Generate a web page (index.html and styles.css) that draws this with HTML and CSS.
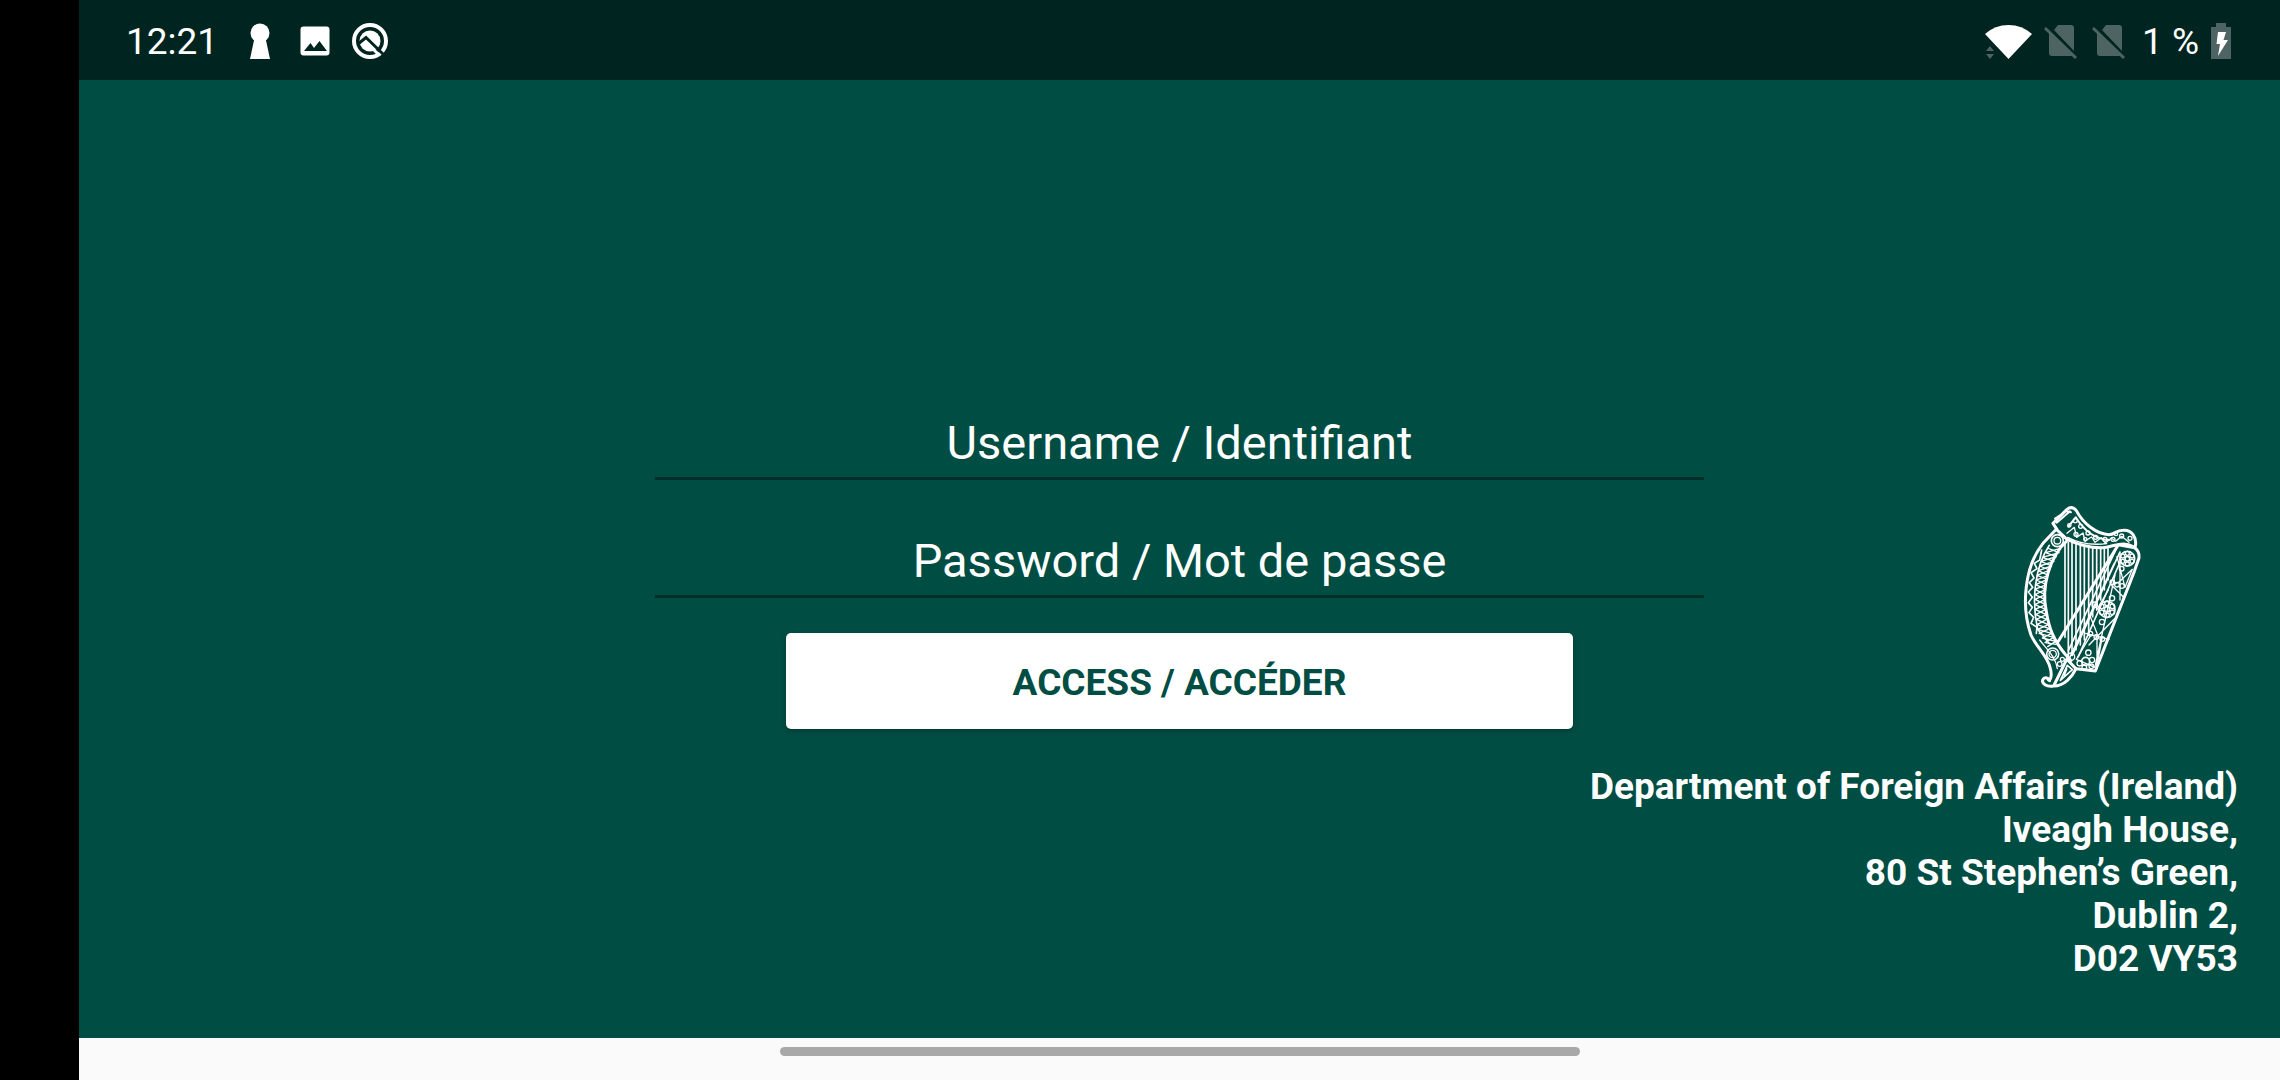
FILE: index.html
```html
<!DOCTYPE html>
<html lang="en">
  <head>
    <meta charset="UTF-8" />
    <meta name="viewport" content="width=device-width, initial-scale=1.0" />
    <title>Department of Foreign Affairs - Login</title>
    <link rel="stylesheet" href="styles.css">
  </head>
  <body>
    <div class="screen">
      <header class="status-bar">
        <span class="clock">12:21</span>
        <div class="notifications">
          <svg class="icon" viewBox="0 0 36 36" fill="#fff">
            <circle cx="18" cy="10" r="9.5" />
            <path d="M12.500 15h11l4.500 21H8z" />
          </svg>
          <svg class="icon" viewBox="0 0 36 36" fill="#fff" fill-rule="evenodd">
            <path d="M6.500 3.500h23a3 3 0 0 1 3 3v23a3 3 0 0 1-3 3h-23a3 3 0 0 1-3-3v-23a3 3 0 0 1 3-3zM7 28h23l-7.500-10-5.500 7-3.500-5z" />
          </svg>
          <svg class="icon" viewBox="0 0 36 36" fill="none">
            <circle cx="18" cy="18" r="16" stroke="#fff" stroke-width="4" />
            <circle cx="18" cy="18" r="10.500" fill="#fff" />
            <path d="M6 21l8-6.500L32 32" stroke="#00241f" stroke-width="3" />
            <path d="M15 20l12 12" stroke="#fff" stroke-width="3" />
          </svg>
        </div>
        <div class="system">
          <svg class="icon-wifi" viewBox="0 0 47 36">
            <path d="M0 11Q10 2 23.500 2T47 11L23.500 36z" fill="#fff" />
            <path d="M1 28l4-5 4 5zM1 31h8l-4 5z" fill="#4d6462" />
          </svg>
          <svg class="icon" viewBox="0 0 36 36" fill="#4d6462">
            <path d="M14 2h13a3 3 0 0 1 3 3v23L10 7zM5 9l24 24H8a3 3 0 0 1-3-3z" />
            <path d="M1 5l31 30" stroke="#4d6462" stroke-width="3" />
          </svg>
          <svg class="icon" viewBox="0 0 36 36" fill="#4d6462">
            <path d="M14 2h13a3 3 0 0 1 3 3v23L10 7zM5 9l24 24H8a3 3 0 0 1-3-3z" />
            <path d="M1 5l31 30" stroke="#4d6462" stroke-width="3" />
          </svg>
          <span class="battery-level">1 %</span>
          <svg class="icon-battery" viewBox="0 0 20 36">
            <path d="M5 0h10v4h5v32H0V4h5z" fill="#4d6462" />
            <path d="M7 9h8l-2.500 8H17L7 33l2-12H5.500z" fill="#fff" />
          </svg>
        </div>
      </header>

      <main class="content">
        <form class="login-form" id="loginForm">
          <input type="text" class="field" name="username" aria-label="Username / Identifiant" placeholder="Username / Identifiant" />
          <input type="password" class="field" name="password" aria-label="Password / Mot de passe" placeholder="Password / Mot de passe" />
          <button type="submit" class="access-btn">ACCESS / ACCÉDER</button>
        </form>

        <div class="department">
          <svg class="harp" viewBox="0 0 405 585" fill="none" stroke="#fff" stroke-linejoin="round" stroke-linecap="round">
            <!-- strings -->
            <path d="M150 128V412M160 128V470M171 130V462M183 132V450M196 135V435M208 137V420M221 140V400M233 142V350M245 143V330M257 143V300M268 143V270M279 143V240" stroke-width="5" />
            <!-- neck -->
            <path d="M114 70L156 28Q171 16 184 32C205 72 246 103 282 104C300 104 302 91 324 91C350 89 368 112 360 143M114 70L128 92L156 118C190 134 225 145 264 143C282 142 290 136 310 134L360 143" stroke-width="9" />
            <path d="M120 56l14-9M151 33l17 4M125 68l40-34M160 80l22-28C205 88 238 118 282 120" stroke-width="6" />
            <path d="M156 100l22-18 7 30 19-13 6 24 20-12 10 16 19-14 12 16 18-15 13 10 18-15 22 18M158 112C195 132 240 135 275 131" stroke-width="4" />
            <g stroke-width="4">
              <circle cx="181" cy="62" r="6" />
              <circle cx="163" cy="76" r="5" />
              <circle cx="197" cy="79" r="6" />
              <circle cx="219" cy="99" r="6" />
              <circle cx="183" cy="103" r="6" />
              <circle cx="242" cy="112" r="6" />
              <circle cx="211" cy="118" r="5" />
              <circle cx="270" cy="118" r="6" />
              <circle cx="294" cy="118" r="6" />
              <circle cx="303" cy="102" r="5" />
              <circle cx="320" cy="108" r="6" />
              <circle cx="345" cy="115" r="6" />
            </g>
            <!-- fore pillar -->
            <path d="M124 88L84 130C28 200 18 320 48 405C62 438 99 470 106 505C112 528 106 545 99 538" stroke-width="9" />
            <path d="M158 120C102 172 78 260 94 335C102 385 116 420 150 462L168 482" stroke-width="9" />
            <path d="M103 136C60 200 48 300 68 388L102 430" stroke-width="5" />
            <!-- lattice between the two curves -->
            <path d="M100 145L132 158L82 172L117 184L74 198L104 210L66 226L97 238L62 254L92 268L60 284L90 298L60 314L92 328L62 344L95 358L66 374L104 386L72 400L116 412L90 428L128 434" stroke-width="4" />
            <path d="M136 145L92 158L124 170L78 184L110 198L70 212L100 226L64 240L94 254L60 268L90 284L60 298L92 314L60 328L94 344L64 358L100 374L68 388L110 400L82 414L122 424L98 440" stroke-width="4" />
            <path d="M80 150l-6 30-16 10 8 16-18 12 9 16-14 14 10 14-13 14 12 16-12 16 12 14-10 16 14 14-8 18 18 12-2 18" stroke-width="5" />
            <circle cx="127" cy="122" r="18" stroke-width="5" />
            <circle cx="127" cy="122" r="10" stroke-width="4" />
            <circle cx="113" cy="462" r="18" stroke-width="5" />
            <circle cx="113" cy="462" r="11" stroke-width="4" />
            <path d="M74 420C94 446 122 470 127 506" stroke-width="4" />
            <!-- sound box -->
            <path d="M310 134C340 126 376 144 372 174L358 214L241 513L183 506M310 134L130 424" stroke-width="9" />
            <path d="M304 146L160 452M314 158L172 466M318 180L190 470M298 190L160 482" stroke-width="5" />
            <path d="M315 155V300M306 170L330 262L352 208L312 246L290 256L326 292M300 225L240 500M280 270L245 330M226 350L246 400V506M300 355L222 435M212 400L282 418M226 408L184 478L240 502M262 410L244 506" stroke-width="4" />
            <g stroke-width="5">
              <circle cx="337" cy="176" r="22" />
              <circle cx="337" cy="176" r="7" />
              <circle cx="276" cy="328" r="24" />
              <circle cx="276" cy="328" r="8" />
              <circle cx="212" cy="484" r="12" />
            </g>
            <g stroke-width="4">
              <circle cx="337" cy="160" r="6" />
              <circle cx="351" cy="168" r="6" />
              <circle cx="351" cy="184" r="6" />
              <circle cx="337" cy="192" r="6" />
              <circle cx="323" cy="184" r="6" />
              <circle cx="323" cy="168" r="6" />
              <circle cx="320" cy="206" r="7" />
              <circle cx="292" cy="247" r="7" />
              <circle cx="306" cy="254" r="7" />
              <circle cx="321" cy="258" r="7" />
              <circle cx="276" cy="310" r="7" />
              <circle cx="292" cy="319" r="7" />
              <circle cx="292" cy="337" r="7" />
              <circle cx="276" cy="346" r="7" />
              <circle cx="260" cy="337" r="7" />
              <circle cx="260" cy="319" r="7" />
              <circle cx="291" cy="295" r="8" />
              <circle cx="261" cy="366" r="8" />
              <circle cx="239" cy="314" r="8" />
              <circle cx="226" cy="401" r="7" />
              <circle cx="244" cy="411" r="7" />
              <circle cx="262" cy="417" r="7" />
              <circle cx="220" cy="458" r="8" />
              <circle cx="194" cy="490" r="8" />
              <circle cx="231" cy="480" r="8" />
              <circle cx="229" cy="499" r="7" />
              <circle cx="208" cy="502" r="7" />
              <circle cx="134" cy="492" r="7" />
              <circle cx="142" cy="478" r="6" />
              <circle cx="168" cy="470" r="11" />
            </g>
            <!-- foot -->
            <path d="M160 482L183 506C172 530 148 558 116 558C94 562 80 550 83 540C88 530 98 532 104 542M155 478L116 558" stroke-width="9" />
            <path d="M157 496L172 509L136 541zM155 507L148 526" stroke-width="5" />
          </svg>
          <address class="address">
            Department of Foreign Affairs (Ireland)<br />
            Iveagh House,<br />
            80 St Stephen’s Green,<br />
            Dublin 2,<br />
            D02 VY53
          </address>
        </div>
      </main>

      <footer class="nav-bar">
        <div class="nav-handle"></div>
      </footer>
    </div>
  </body>
</html>
```
FILE: styles.css
```css
* {
  box-sizing: border-box;
}
body {
  margin: 0;
  padding-left: 79px;
  background-color: #000;
  color: #fff;
  font-family: Roboto, sans-serif;
}
.screen {
  display: flex;
  flex-direction: column;
  min-height: 100vh;
  background-color: #004d44;
}

/* status bar */
.status-bar {
  display: flex;
  align-items: center;
  height: 80px;
  padding: 2px 49px 0 47px;
  background-color: #00241f;
  font-size: 37px;
}
.notifications {
  display: flex;
  gap: 19px;
  margin-left: 24px;
}
.system {
  display: flex;
  align-items: center;
  gap: 12px;
  margin-left: auto;
}
.battery-level {
  margin-left: 2px;
}
.icon {
  width: 36px;
  height: 36px;
}
.icon-wifi {
  width: 47px;
  height: 36px;
}
.icon-battery {
  width: 20px;
  height: 36px;
}

/* form and address share one cell */
.content {
  display: grid;
  flex: 1;
}
.login-form {
  grid-area: 1 / 1;
  place-self: center;
  display: flex;
  flex-direction: column;
  align-items: center;
  width: 48%;
  padding: 0 4px;
}
.field {
  width: 100%;
  margin-bottom: 28px;
  padding: 24px 0 6px;
  border: none;
  border-bottom: 3px solid #002e29;
  border-radius: 0;
  outline: none;
  background: transparent;
  color: #fff;
  font-family: inherit;
  font-size: 47px;
  line-height: 57px;
  text-align: center;
}
.field::placeholder {
  color: #fff;
  opacity: 1;
}
.access-btn {
  width: 75%;
  height: 96px;
  margin-top: 7px;
  padding-top: 4px;
  border: none;
  border-radius: 5px;
  background-color: #fff;
  box-shadow: 0 2px 5px rgba(0, 0, 0, 0.25);
  color: #004d44;
  font-family: inherit;
  font-size: 37px;
  font-weight: bold;
  cursor: pointer;
}
.department {
  grid-area: 1 / 1;
  place-self: end;
  display: flex;
  flex-direction: column;
  align-items: flex-end;
  gap: 70px;
  padding: 0 42px 58px 0;
}
.harp {
  width: 135px;
  height: 195px;
  margin-right: 88px;
}
.address {
  font-size: 37px;
  font-style: normal;
  font-weight: bold;
  line-height: 43px;
  text-align: right;
}

/* gesture bar */
.nav-bar {
  display: flex;
  justify-content: center;
  height: 42px;
  padding-top: 9px;
  background-color: #fafafa;
}
.nav-handle {
  width: 60%;
  max-width: 800px;
  height: 9px;
  border-radius: 5px;
  background-color: #a8a8a8;
}
```
